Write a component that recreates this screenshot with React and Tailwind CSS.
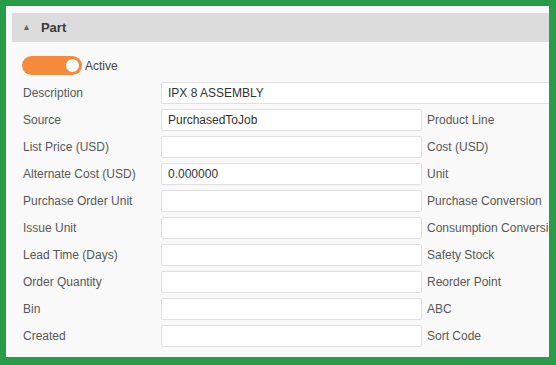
import React from 'react';

const rows = [
  { left: 'Source', value: 'PurchasedToJob', right: 'Product Line' },
  { left: 'List Price (USD)', value: '', right: 'Cost (USD)' },
  { left: 'Alternate Cost (USD)', value: '0.000000', right: 'Unit' },
  { left: 'Purchase Order Unit', value: '', right: 'Purchase Conversion' },
  { left: 'Issue Unit', value: '', right: 'Consumption Conversion' },
  { left: 'Lead Time (Days)', value: '', right: 'Safety Stock' },
  { left: 'Order Quantity', value: '', right: 'Reorder Point' },
  { left: 'Bin', value: '', right: 'ABC' },
  { left: 'Created', value: '', right: 'Sort Code' },
];

function Field({ value, wide }) {
  return (
    <div
      className={`h-[22px] ${wide ? 'w-[400px]' : 'w-[261px]'} shrink-0 border border-[#e0e0e0] bg-white rounded-[2px] px-[6px] flex items-center text-[12px] text-[#333]`}
    >
      {value}
    </div>
  );
}

export default function App() {
  return (
    <div className="w-[556px] h-[365px] bg-[#2a9b48] pt-[6px] pl-[6px]" style={{ fontFamily: '"Liberation Sans", Arial, sans-serif' }}>
      <div className="w-[543px] h-[351px] bg-[#f9f9f9] overflow-hidden pt-[7px]">
        {/* Section header */}
        <div className="ml-[6px] h-[29px] bg-[#dcdcdc] flex items-center">
          <span className="ml-[10px] text-[9px] text-[#666] leading-none">▲</span>
          <span className="ml-[10px] text-[13px] font-bold text-[#3a3a3a]">Part</span>
        </div>

        {/* Active toggle */}
        <div className="flex items-center mt-[14px] ml-[16px] h-[19px]">
          <div className="w-[60px] h-[19px] rounded-full bg-[#f58a3d] flex items-center justify-end pr-[3px]">
            <div className="w-[13px] h-[13px] rounded-full bg-white" />
          </div>
          <span className="ml-[3px] text-[12px] text-[#444]">Active</span>
        </div>

        {/* Fields */}
        <div className="mt-[7px] flex flex-col gap-[5px]">
          <div className="flex items-center h-[22px]">
            <span className="w-[155px] shrink-0 pl-[17px] text-[12px] text-[#585858]">Description</span>
            <Field value="IPX 8 ASSEMBLY" wide />
          </div>
          {rows.map((r) => (
            <div key={r.left} className="flex items-center h-[22px]">
              <span className="w-[155px] shrink-0 pl-[17px] text-[12px] text-[#585858] whitespace-nowrap">{r.left}</span>
              <Field value={r.value} />
              <span className="ml-[5px] text-[12px] text-[#585858] whitespace-nowrap">{r.right}</span>
            </div>
          ))}
        </div>
      </div>
    </div>
  );
}
